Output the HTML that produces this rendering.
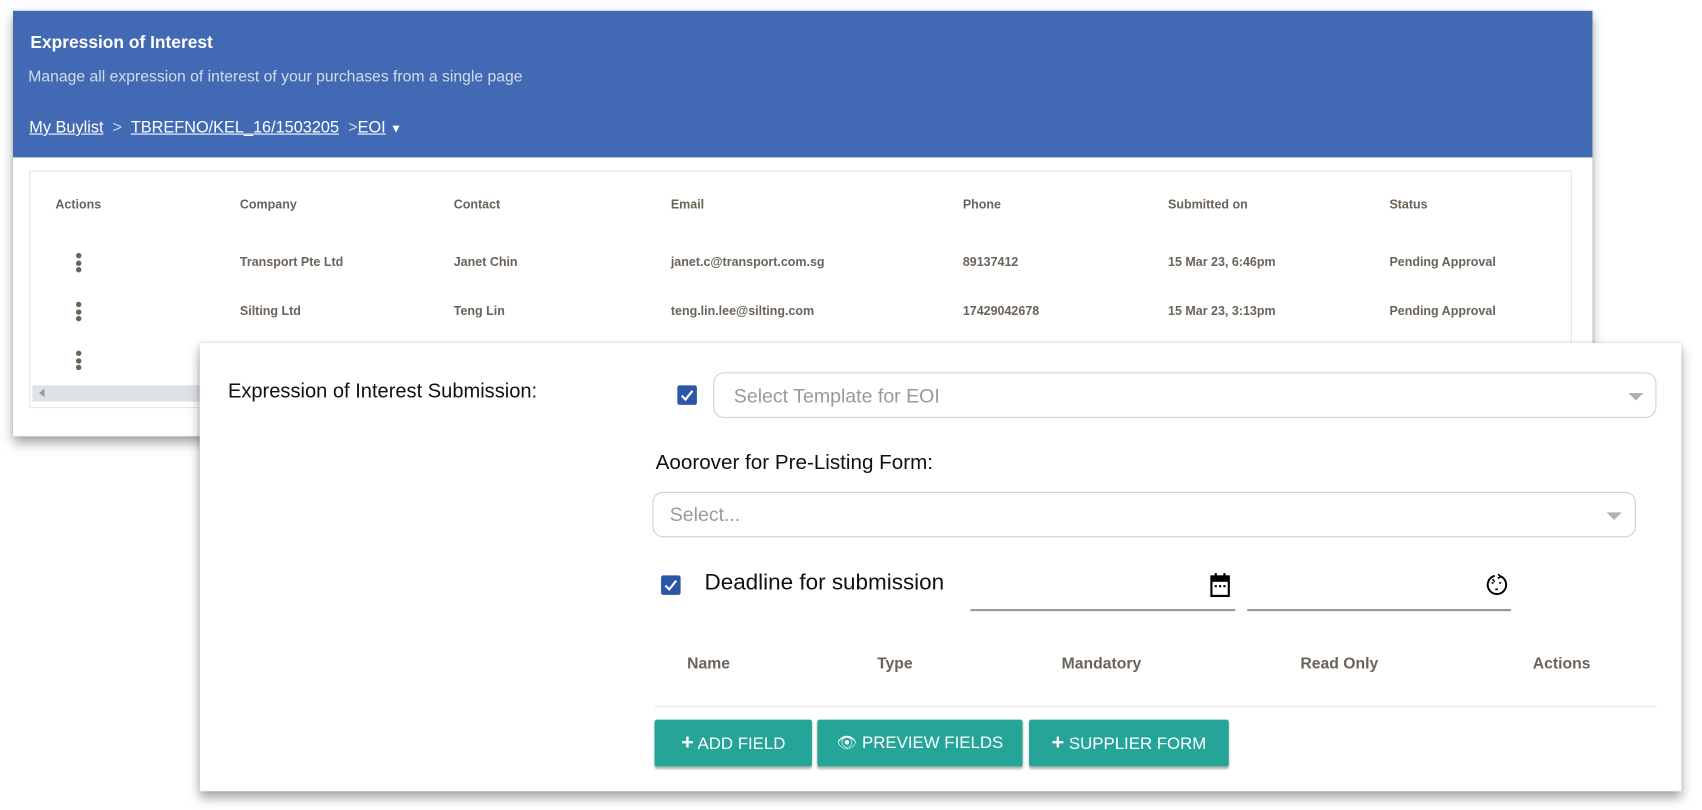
<!DOCTYPE html>
<html><head><meta charset="utf-8"><style>
html,body{margin:0;padding:0;background:#fff;width:1702px;height:810px;overflow:hidden}
#w{position:absolute;left:0;top:0;width:1568px;height:746px;transform:scale(1.0855);transform-origin:0 0;font-family:"Liberation Sans",sans-serif}
.a{position:absolute;white-space:nowrap}
.card{position:absolute;background:#fff;box-shadow:0 6px 10px rgba(0,0,0,.35),0 0 3px rgba(0,0,0,.15)}
.th{font-family:"Liberation Sans Narrow","Liberation Sans",sans-serif;font-weight:bold;color:#6b625a;font-size:11.5px;line-height:14px}
.dots{position:absolute;width:5px}
.dots i{display:block;width:5px;height:5px;border-radius:50%;background:#6b625a;margin-bottom:1.5px}
.sel{position:absolute;border:1px solid #cfcfcf;border-radius:10px;box-sizing:border-box;color:#9a9a9a;font-size:18px}
.sel .tri{position:absolute;width:0;height:0;border-left:7px solid transparent;border-right:7px solid transparent;border-top:7px solid #b4aeae;top:18px}
.cb{position:absolute;width:18px;height:18px;background:#2c56a8;border-radius:2px}
.cb svg{position:absolute;left:2px;top:2px}
.btn{position:absolute;top:663px;height:43px;background:#24a598;color:#fff;font-size:15.5px;line-height:43px;text-align:center;box-shadow:0 2px 2px rgba(0,0,0,.3);border-radius:2px;font-family:"Liberation Sans Narrow","Liberation Sans",sans-serif}
.hd{font-family:"Liberation Sans Narrow","Liberation Sans",sans-serif;font-weight:bold;color:#6b625a;font-size:14.5px}
</style></head><body><div id="w">

<div class="card" style="left:12px;top:10px;width:1455px;height:392px">
  <div style="position:absolute;left:0;top:0;width:1455px;height:135px;background:#4169b4"></div>
  <div class="a" style="left:16px;top:21px;font-size:16px;font-weight:bold;color:#fff">Expression of Interest</div>
  <div class="a" style="left:14px;top:53px;font-size:14.5px;color:#d5dbe8">Manage all expression of interest of your purchases from a single page</div>
  <div class="a" style="left:15px;top:99px;font-size:15px;color:#fff"><span style="text-decoration:underline">My Buylist</span>&nbsp; <span style="color:#c8d2e6">&gt;</span>&nbsp; <span style="text-decoration:underline">TBREFNO/KEL_16/1503205</span>&nbsp; <span style="color:#c8d2e6">&gt;</span><span style="text-decoration:underline">EOI</span> <span style="font-size:11px">▼</span></div>
  <div style="position:absolute;left:15px;top:147px;width:1421px;height:219px;border:1px solid #e4e4e4;box-sizing:border-box;background:#fff"></div>
  <div style="position:absolute;left:18px;top:345px;width:180px;height:15px;background:#dfe3e7"></div>
  <div style="position:absolute;left:24px;top:348px;width:0;height:0;border-top:4px solid transparent;border-bottom:4px solid transparent;border-right:5px solid #999"></div>
</div>
<div class="a th" style="left:51px;top:182px">Actions</div>
<div class="a th" style="left:221px;top:182px">Company</div>
<div class="a th" style="left:418px;top:182px">Contact</div>
<div class="a th" style="left:618px;top:182px">Email</div>
<div class="a th" style="left:887px;top:182px">Phone</div>
<div class="a th" style="left:1076px;top:182px">Submitted on</div>
<div class="a th" style="left:1280px;top:182px">Status</div>

<div class="dots" style="left:70px;top:233px"><i></i><i></i><i></i></div>
<div class="a th" style="left:221px;top:235px">Transport Pte Ltd</div>
<div class="a th" style="left:418px;top:235px">Janet Chin</div>
<div class="a th" style="left:618px;top:235px">janet.c@transport.com.sg</div>
<div class="a th" style="left:887px;top:235px">89137412</div>
<div class="a th" style="left:1076px;top:235px">15 Mar 23, 6:46pm</div>
<div class="a th" style="left:1280px;top:235px">Pending Approval</div>

<div class="dots" style="left:70px;top:278px"><i></i><i></i><i></i></div>
<div class="a th" style="left:221px;top:280px">Silting Ltd</div>
<div class="a th" style="left:418px;top:280px">Teng Lin</div>
<div class="a th" style="left:618px;top:280px">teng.lin.lee@silting.com</div>
<div class="a th" style="left:887px;top:280px">17429042678</div>
<div class="a th" style="left:1076px;top:280px">15 Mar 23, 3:13pm</div>
<div class="a th" style="left:1280px;top:280px">Pending Approval</div>
<div class="dots" style="left:70px;top:323px"><i></i><i></i><i></i></div>

<div class="card" style="left:184px;top:316px;width:1365px;height:413px"></div>
<div class="a" style="left:210px;top:349px;font-size:18.5px;color:#111">Expression of Interest Submission:</div>
<div class="cb" style="left:624px;top:355px"><svg width="14" height="14" viewBox="0 0 14 14"><path d="M2 7.5 L5.5 11 L12 3" stroke="#fff" stroke-width="2" fill="none"/></svg></div>
<div class="sel" style="left:657px;top:343px;width:869px;height:42px"><span class="a" style="left:18px;top:11px">Select Template for EOI</span><span class="tri" style="left:842px"></span></div>
<div class="a" style="left:604px;top:416px;font-size:19px;color:#111">Aoorover for Pre-Listing Form:</div>
<div class="sel" style="left:601px;top:453px;width:906px;height:42px"><span class="a" style="left:15px;top:10px">Select...</span><span class="tri" style="left:878px"></span></div>
<div class="cb" style="left:609px;top:530px"><svg width="14" height="14" viewBox="0 0 14 14"><path d="M2 7.5 L5.5 11 L12 3" stroke="#fff" stroke-width="2" fill="none"/></svg></div>
<div class="a" style="left:649px;top:525px;font-size:20.7px;color:#111">Deadline for submission</div>
<div style="position:absolute;left:894px;top:561px;width:244px;height:2px;background:#9a9a9a"></div>
<div style="position:absolute;left:1149px;top:561px;width:243px;height:2px;background:#9a9a9a"></div>
<svg class="a" style="left:1114px;top:527px" width="20" height="24" viewBox="0 0 20 24"><rect x="2" y="4" width="16" height="18" fill="none" stroke="#000" stroke-width="2"/><rect x="2" y="4" width="16" height="5" fill="#000"/><rect x="5" y="1" width="2" height="4" fill="#000"/><rect x="13" y="1" width="2" height="4" fill="#000"/><rect x="5" y="12" width="2" height="2" fill="#000"/><rect x="9" y="12" width="2" height="2" fill="#000"/><rect x="13" y="12" width="2" height="2" fill="#000"/></svg>
<svg class="a" style="left:1367px;top:527px" width="24" height="24" viewBox="0 0 24 24"><path d="M10 3.5 A8.5 8.5 0 1 0 15 3.8" fill="none" stroke="#000" stroke-width="1.8"/><path d="M13 2 L15.5 4 L13 6" fill="none" stroke="#000" stroke-width="1.5"/><path d="M7 10 L9 10 M14 10 L16 10 M10.5 16 L13 16 M8 6.5 L10 9" stroke="#000" stroke-width="1.4"/></svg>
<div class="a hd" style="left:633px;top:604px">Name</div>
<div class="a hd" style="left:808px;top:604px">Type</div>
<div class="a hd" style="left:978px;top:604px">Mandatory</div>
<div class="a hd" style="left:1198px;top:604px">Read Only</div>
<div class="a hd" style="left:1412px;top:604px">Actions</div>
<div style="position:absolute;left:603px;top:650px;width:923px;height:2px;background:#efefef"></div>
<div class="btn" style="left:603px;width:145px"><b style="font-size:20px">+</b> ADD FIELD</div>
<div class="btn" style="left:753px;width:189px"><span style="font-size:15px">👁</span> PREVIEW FIELDS</div>
<div class="btn" style="left:948px;width:184px"><b style="font-size:20px">+</b> SUPPLIER FORM</div>
</div></body></html>
